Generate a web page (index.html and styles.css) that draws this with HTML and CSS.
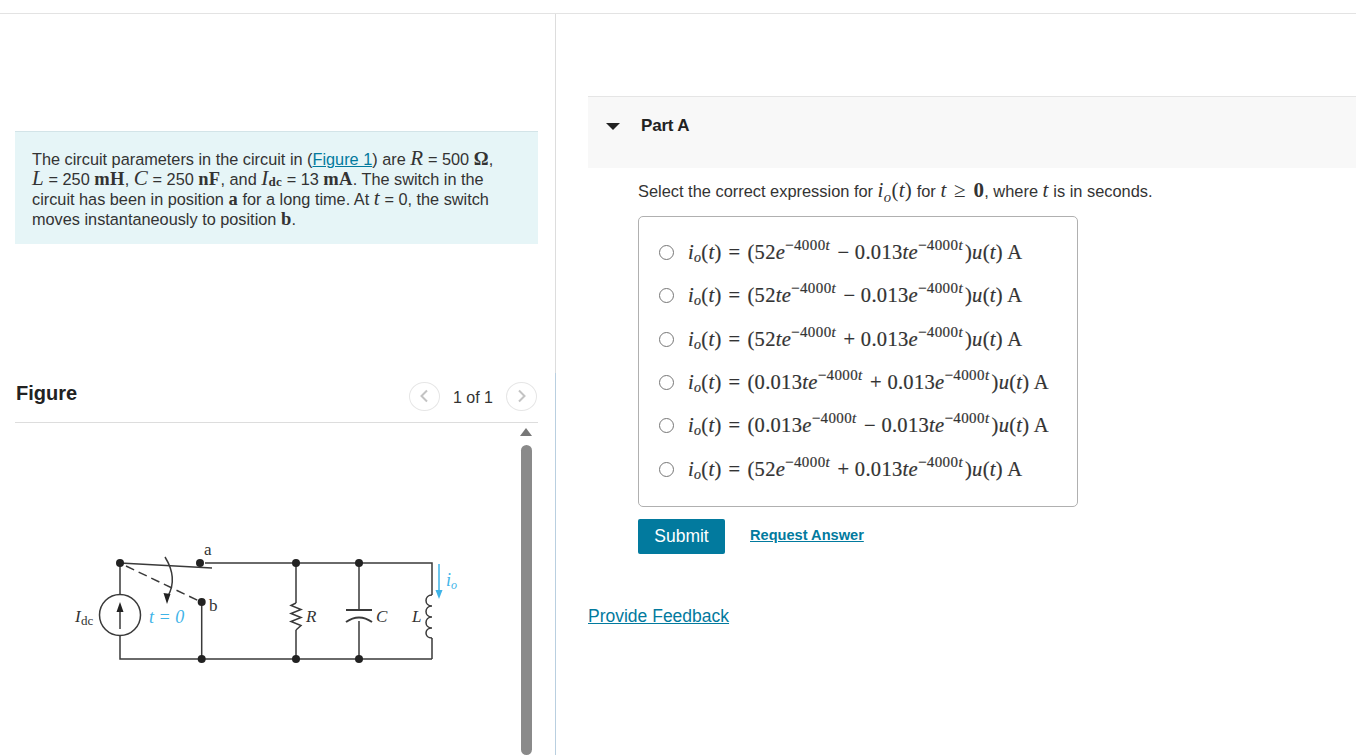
FILE: index.html
```html
<!DOCTYPE html>
<html lang="en">
<head>
    <meta charset="UTF-8">
    <title>Part A</title>
    <link rel="stylesheet" href="styles.css">
</head>
<body>
<div class="page">
    <div class="leftCol">
        <div class="problem">
            <div class="intro">
                The circuit parameters in the circuit in (<a href="#">Figure 1</a>) are <span class="m big"><i>R</i></span> = 500 <span class="m b">&Omega;</span>,<br>
                <span class="m big"><i>L</i></span> = 250 <span class="m b">mH</span>, <span class="m big"><i>C</i></span> = 250 <span class="m b">nF</span>, and <span class="m big"><i>I</i><sub class="b">dc</sub></span> = 13 <span class="m b">mA</span>. The switch in the<br>
                circuit has been in position <span class="m b">a</span> for a long time. At <span class="m big"><i>t</i></span> = 0, the switch<br>
                moves instantaneously to position <span class="m b">b</span>.
            </div>
        </div>
        <div class="figure">
            <div class="figHead">
                <h2>Figure</h2>
                <div class="pager">
                    <span class="pageBtn"><svg width="10" height="14" viewBox="0 0 10 14"><path d="M8 1.5 2.500 7 8 12.500" /></svg></span>
                    <span class="pageText">1 of 1</span>
                    <span class="pageBtn"><svg width="10" height="14" viewBox="0 0 10 14"><path d="M2 1.500 7.500 7 2 12.500" /></svg></span>
                </div>
            </div>
            <div class="figBody">
                <svg class="circuit" width="505" height="332" viewBox="15 423 505 332">
                    <g class="wire">
                        <path d="M120 563V595M120 635V659H432M120 563L212 568M205 563H432V595M432 638V659" />
                        <path d="M126 566L199 601" stroke-dasharray="9 5" />
                        <path d="M201.700 602V659M296 563V603M296 630V659M359 563V610M359 621V659" />
                        <path class="plate" d="M346 610H372M346 622Q359 613 372 622" />
                        <path d="M296 603l-5 2.500 10 4-10 4 10 4-10 4 10 4-5 4.500" />
                        <path d="M432 595c-8 0-8 11 0 11c-8 0-8 11 0 11c-8 0-8 11 0 11c-8 0-8 10 0 10" />
                        <circle cx="120" cy="615" r="20.500" />
                        <path d="M120 629V610" />
                        <path d="M165 557Q178 578 168 596" />
                    </g>
                    <g class="dot">
                        <circle cx="120" cy="563" r="4" /><circle cx="200" cy="563" r="4" /><circle cx="296" cy="563" r="4" /><circle cx="359" cy="563" r="4" />
                        <circle cx="201.700" cy="602" r="4" /><circle cx="201.700" cy="659" r="4" /><circle cx="296" cy="659" r="4" /><circle cx="359" cy="659" r="4" />
                        <path d="M120 602l-3.500 10h7zM167 604l-3.500-11 7 1z" />
                    </g>
                    <path class="blueLine" d="M439 564V592" />
                    <path class="blueHead" d="M435.500 590h7l-3.500 9z" />
                    <text class="lbl" x="204" y="555">a</text>
                    <text class="lbl" x="209" y="611">b</text>
                    <text class="lbl it" x="75" y="622">I</text>
                    <text class="lblSub" x="81" y="625">dc</text>
                    <text class="lbl it" x="306" y="622">R</text>
                    <text class="lbl it" x="376" y="622">C</text>
                    <text class="lbl it" x="412" y="622">L</text>
                    <text class="lblBlue it" x="149" y="623">t = 0</text>
                    <text class="lblBlue it" x="446" y="586">i</text>
                    <text class="lblBlueSub it" x="451" y="589">o</text>
                </svg>
                <div class="scrollbar">
                    <span class="scrollUp"></span>
                    <span class="scrollThumb"></span>
                </div>
            </div>
        </div>
    </div>
    <div class="rightCol">
        <div class="partHead">
            <span class="caret"></span>
            <h3>Part A</h3>
        </div>
        <div class="partBody">
            <p class="question">Select the correct expression for <span class="m big"><i>i<sub>o</sub></i>(<i>t</i>)</span> for <span class="m big"><i>t</i> &ge; <span class="b">0</span></span>, where <span class="m big"><i>t</i></span> is in seconds.</p>
            <div class="choices">
                <label class="choice"><span class="radio"></span><span class="eq"><i>i<sub>o</sub></i>(<i>t</i>)<span class="rel">=</span>(52<i>e</i><sup>&minus;4000<i>t</i></sup> &minus; 0.013<i>te</i><sup>&minus;4000<i>t</i></sup>)<i>u</i>(<i>t</i>) A</span></label>
                <label class="choice"><span class="radio"></span><span class="eq"><i>i<sub>o</sub></i>(<i>t</i>)<span class="rel">=</span>(52<i>te</i><sup>&minus;4000<i>t</i></sup> &minus; 0.013<i>e</i><sup>&minus;4000<i>t</i></sup>)<i>u</i>(<i>t</i>) A</span></label>
                <label class="choice"><span class="radio"></span><span class="eq"><i>i<sub>o</sub></i>(<i>t</i>)<span class="rel">=</span>(52<i>te</i><sup>&minus;4000<i>t</i></sup> + 0.013<i>e</i><sup>&minus;4000<i>t</i></sup>)<i>u</i>(<i>t</i>) A</span></label>
                <label class="choice"><span class="radio"></span><span class="eq"><i>i<sub>o</sub></i>(<i>t</i>)<span class="rel">=</span>(0.013<i>te</i><sup>&minus;4000<i>t</i></sup> + 0.013<i>e</i><sup>&minus;4000<i>t</i></sup>)<i>u</i>(<i>t</i>) A</span></label>
                <label class="choice"><span class="radio"></span><span class="eq"><i>i<sub>o</sub></i>(<i>t</i>)<span class="rel">=</span>(0.013<i>e</i><sup>&minus;4000<i>t</i></sup> &minus; 0.013<i>te</i><sup>&minus;4000<i>t</i></sup>)<i>u</i>(<i>t</i>) A</span></label>
                <label class="choice"><span class="radio"></span><span class="eq"><i>i<sub>o</sub></i>(<i>t</i>)<span class="rel">=</span>(52<i>e</i><sup>&minus;4000<i>t</i></sup> + 0.013<i>te</i><sup>&minus;4000<i>t</i></sup>)<i>u</i>(<i>t</i>) A</span></label>
            </div>
            <div class="actions">
                <button type="button" class="submit">Submit</button>
                <a href="#" class="reqAnswer">Request Answer</a>
            </div>
        </div>
        <a href="#" class="feedback">Provide Feedback</a>
    </div>
</div>
</body>
</html>
```
FILE: styles.css
```css
html, body{
    margin: 0;
    height: 755px;
    overflow: hidden;
    background-color: #fff;
    font-family: "Liberation Sans", Arial, sans-serif;
    color: #333;
}
a{
    color: #027a9e;
}
.page{
    display: flex;
    height: 741px;
    margin-top: 13px;
    border-top: 1px solid #e3e3e3;
}
.leftCol{
    width: 556px;
    flex: none;
    display: flex;
    flex-direction: column;
}
.problem{
    height: 359px;
    box-sizing: border-box;
    padding: 117px 17px 0 15px;
    border-right: 1px solid #ddd;
}
.intro{
    width: 523px;
    box-sizing: border-box;
    height: 113px;
    padding: 17px 16px 0 17px;
    background-color: #e6f5f7;
    border-top: 1px solid #d3e4e8;
    font-size: 16.300px;
    line-height: 20px;
    white-space: nowrap;
}
.intro sub{
    font-size: 13px;
    vertical-align: -1px;
}
.m{
    font-family: "Liberation Serif", serif;
    font-size: 18.500px;
    line-height: 0;
    letter-spacing: 0.300px;
}
.big{
    font-size: 21px;
    word-spacing: 2px;
}
.b{
    font-weight: bold;
}
sub{
    font-size: 70%;
    line-height: 0;
}
.figure{
    flex: 1;
    min-height: 0;
    padding: 7px 0 0 15px;
    border-right: 1px solid #b9cfe0;
    display: flex;
    flex-direction: column;
}
.figHead{
    width: 523px;
    height: 42px;
    flex: none;
    display: flex;
    justify-content: space-between;
    align-items: center;
    border-bottom: 1px solid #ddd;
}
.figHead h2{
    margin: -16px 0 0 1px;
    font-size: 20px;
    color: #222;
}
.pager{
    display: flex;
    align-items: center;
    gap: 13px;
    margin-right: 1px;
    margin-top: -10px;
}
.pageBtn{
    width: 29px;
    height: 27px;
    border: 1px solid #e6e6e6;
    border-radius: 50%;
    display: flex;
    align-items: center;
    justify-content: center;
}
.pageBtn svg path{
    fill: none;
    stroke: #c3c3c3;
    stroke-width: 2;
}
.pageText{
    margin-top: 3px;
    font-size: 16px;
}
.figBody{
    flex: 1;
    min-height: 0;
    display: flex;
    position: relative;
}
.circuit{
    flex: none;
    display: block;
}
.wire path, .wire circle{
    fill: none;
    stroke: #3a3a3a;
    stroke-width: 1.500;
}
.wire .plate{
    stroke-width: 2;
}
.dot circle, .dot path{
    fill: #222;
}
.blueLine{
    stroke: #3fb4e8;
    stroke-width: 1.500;
}
.blueHead{
    fill: #3fb4e8;
}
.lbl, .lblSub, .lblBlue, .lblBlueSub{
    font-family: "Liberation Serif", serif;
    fill: #333;
}
.lbl{
    font-size: 17px;
}
.lblSub{
    font-size: 13px;
}
.lblBlue{
    font-size: 18px;
    fill: #3fb4e8;
}
.lblBlueSub{
    font-size: 12px;
    fill: #3fb4e8;
}
.it{
    font-style: italic;
}
.scrollbar{
    width: 12px;
    flex: none;
    display: flex;
    flex-direction: column;
    align-items: center;
    margin-top: 5px;
}
.scrollUp{
    width: 0;
    height: 0;
    border-left: 6px solid transparent;
    border-right: 6px solid transparent;
    border-bottom: 8px solid #777;
}
.scrollThumb{
    width: 11px;
    flex: 1;
    margin-top: 9px;
    background-color: #8a8a8a;
    border-radius: 6px;
}
.rightCol{
    flex: 1;
    padding: 82px 0 0 32px;
    min-width: 0;
}
.partHead{
    height: 71px;
    display: flex;
    align-items: flex-start;
    background-color: #f8f8f8;
    border-top: 1px solid #e5e5e5;
}
.caret{
    width: 0;
    height: 0;
    margin: 26px 21px 0 18px;
    border-left: 7px solid transparent;
    border-right: 7px solid transparent;
    border-top: 7px solid #222;
}
.partHead h3{
    margin: 19px 0 0;
    font-size: 17px;
    line-height: 20px;
    letter-spacing: -0.200px;
    color: #222;
}
.partBody{
    padding-left: 50px;
}
.question{
    margin: 0;
    box-sizing: border-box;
    padding-top: 12px;
    height: 36px;
    font-size: 16.400px;
    line-height: 22px;
    white-space: nowrap;
}
.choices{
    width: 440px;
    height: 291px;
    box-sizing: border-box;
    margin-top: 12px;
    padding: 14px 0 0 20px;
    border: 1px solid #b0b0b0;
    border-radius: 5px;
}
.choice{
    height: 43.300px;
    display: flex;
    align-items: center;
}
.radio{
    width: 13px;
    height: 13px;
    flex: none;
    border: 1.500px solid #767676;
    border-radius: 50%;
    margin-right: 14px;
}
.eq{
    font-family: "Liberation Serif", serif;
    font-size: 20.500px;
    letter-spacing: 0.300px;
    white-space: nowrap;
    -webkit-text-stroke: 0.200px #333;
}
.rel{
    margin: 0 7px;
}
.eq sup{
    font-size: 15px;
    line-height: 0;
    vertical-align: 9px;
    letter-spacing: 0.400px;
    margin-right: 2px;
}
.eq sub{
    font-size: 14px;
    vertical-align: -3px;
}
.actions{
    display: flex;
    align-items: flex-start;
    margin-top: 12px;
}
.submit{
    width: 87px;
    height: 35px;
    border: none;
    border-radius: 2px;
    background-color: #027a9e;
    color: #fff;
    font-family: "Liberation Sans", Arial, sans-serif;
    font-size: 17.500px;
}
.reqAnswer{
    margin: 7px 0 0 25px;
    font-size: 14.600px;
    font-weight: bold;
    line-height: 18px;
}
.feedback{
    display: block;
    margin-top: 51px;
    font-size: 17.500px;
    line-height: 22px;
}
```
